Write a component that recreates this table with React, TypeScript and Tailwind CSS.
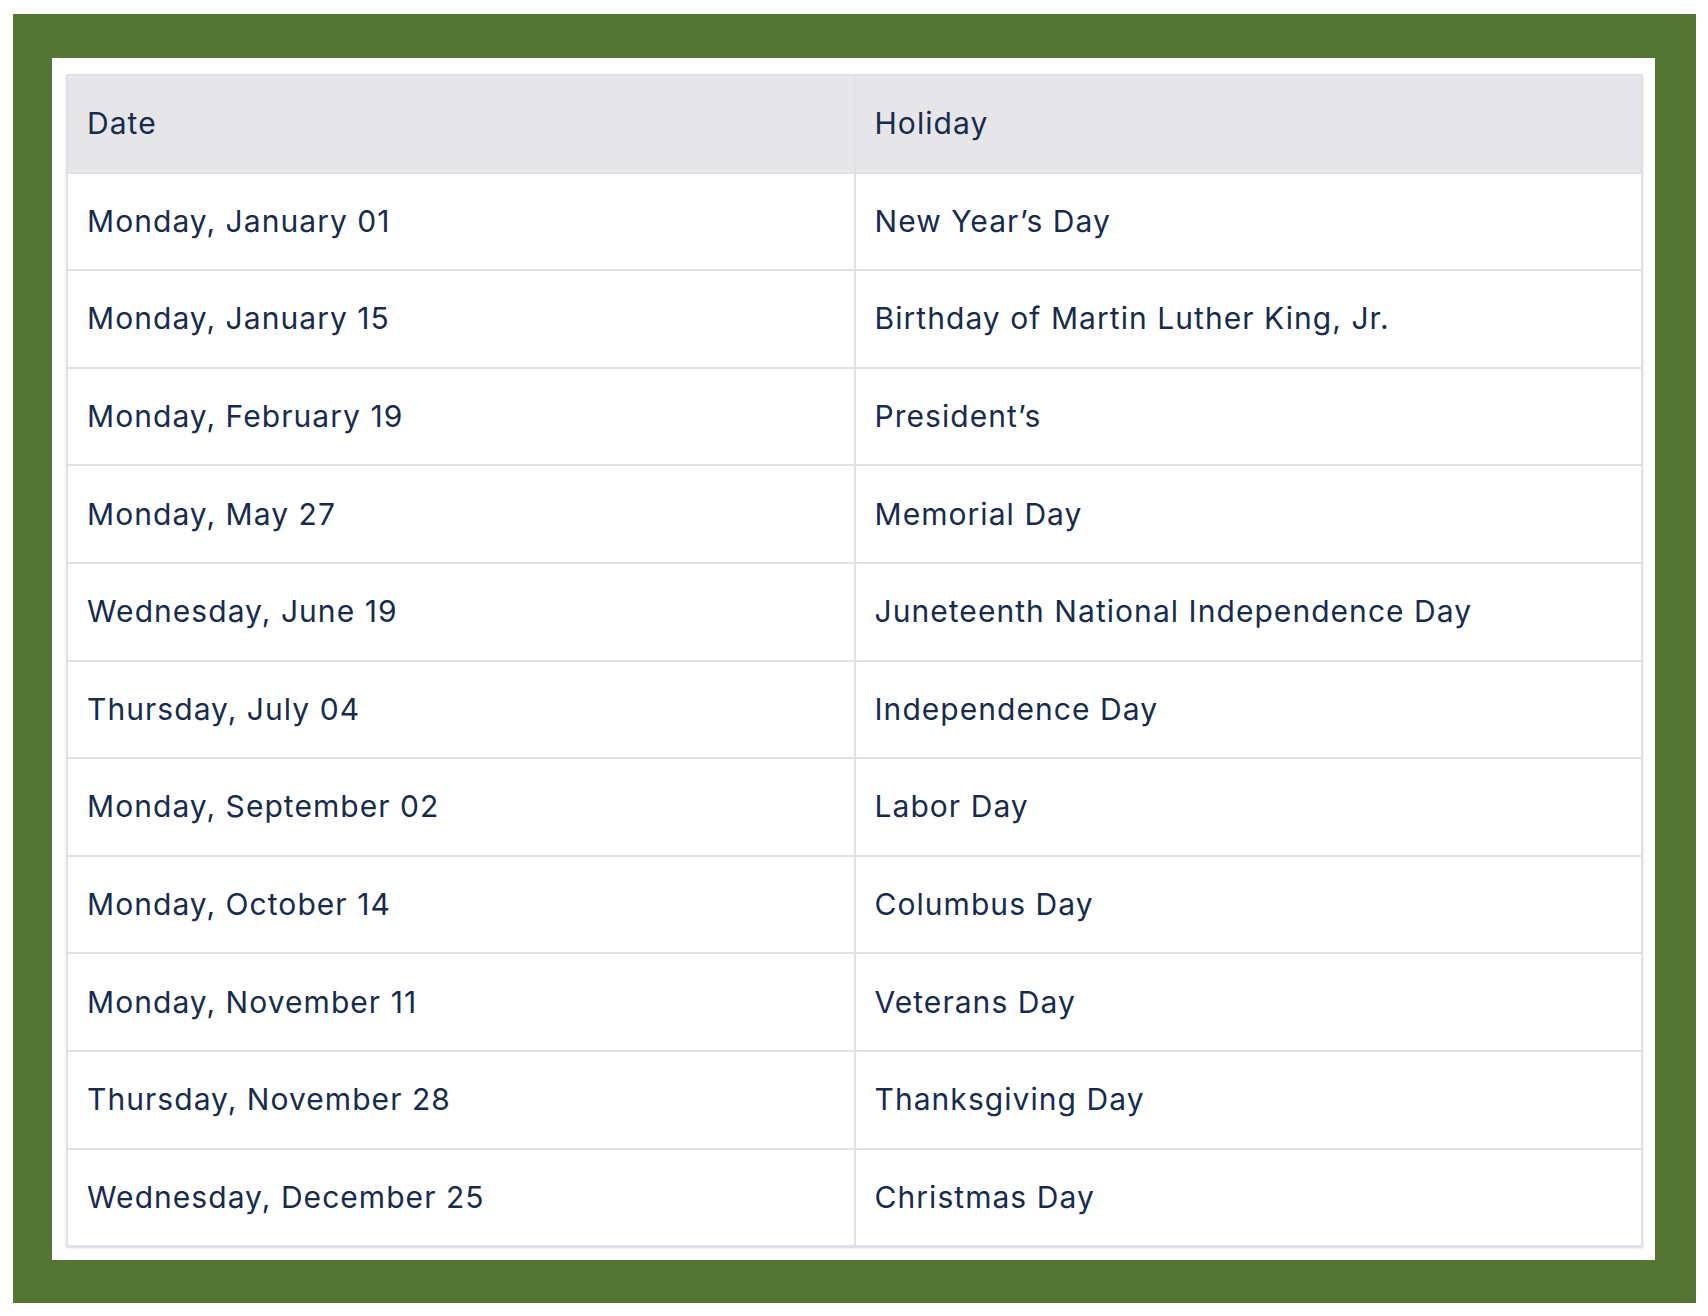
const rows: [string, string][] = [
  ["Monday, January 01", "New Year’s Day"],
  ["Monday, January 15", "Birthday of Martin Luther King, Jr."],
  ["Monday, February 19", "President’s"],
  ["Monday, May 27", "Memorial Day"],
  ["Wednesday, June 19", "Juneteenth National Independence Day"],
  ["Thursday, July 04", "Independence Day"],
  ["Monday, September 02", "Labor Day"],
  ["Monday, October 14", "Columbus Day"],
  ["Monday, November 11", "Veterans Day"],
  ["Thursday, November 28", "Thanksgiving Day"],
  ["Wednesday, December 25", "Christmas Day"],
];

export default function App() {
  return (
    <div className="h-[1316px] w-[1708px] bg-white pl-[13px] pt-[14px]">
      <div className="h-[1289px] w-[1683px] bg-[#557535] pl-[39px] pt-[44px]">
        <div className="h-[1202px] w-[1603px] bg-white pl-[14px] pt-[16px]">
          <table
            className="w-[1577px] table-fixed border-collapse text-[30px] font-normal tracking-[0.035em] text-[#172b4d] shadow-[0_1px_2px_rgba(9,30,66,0.18)]"
            style={{ fontFamily: "Inter, 'Noto Sans', sans-serif" }}
          >
            <thead>
              <tr className="h-[97.6px] bg-[#e6e6e8]">
                <th className="border-2 border-[#dfe1e6] px-[19px] text-left font-normal">Date</th>
                <th className="border-2 border-[#dfe1e6] px-[19px] text-left font-normal">Holiday</th>
              </tr>
            </thead>
            <tbody>
              {rows.map(([date, name]) => (
                <tr key={date} className="h-[97.6px]">
                  <td className="border-2 border-[#dfe1e6] px-[19px]">{date}</td>
                  <td className="border-2 border-[#dfe1e6] px-[19px]">{name}</td>
                </tr>
              ))}
            </tbody>
          </table>
        </div>
      </div>
    </div>
  );
}
